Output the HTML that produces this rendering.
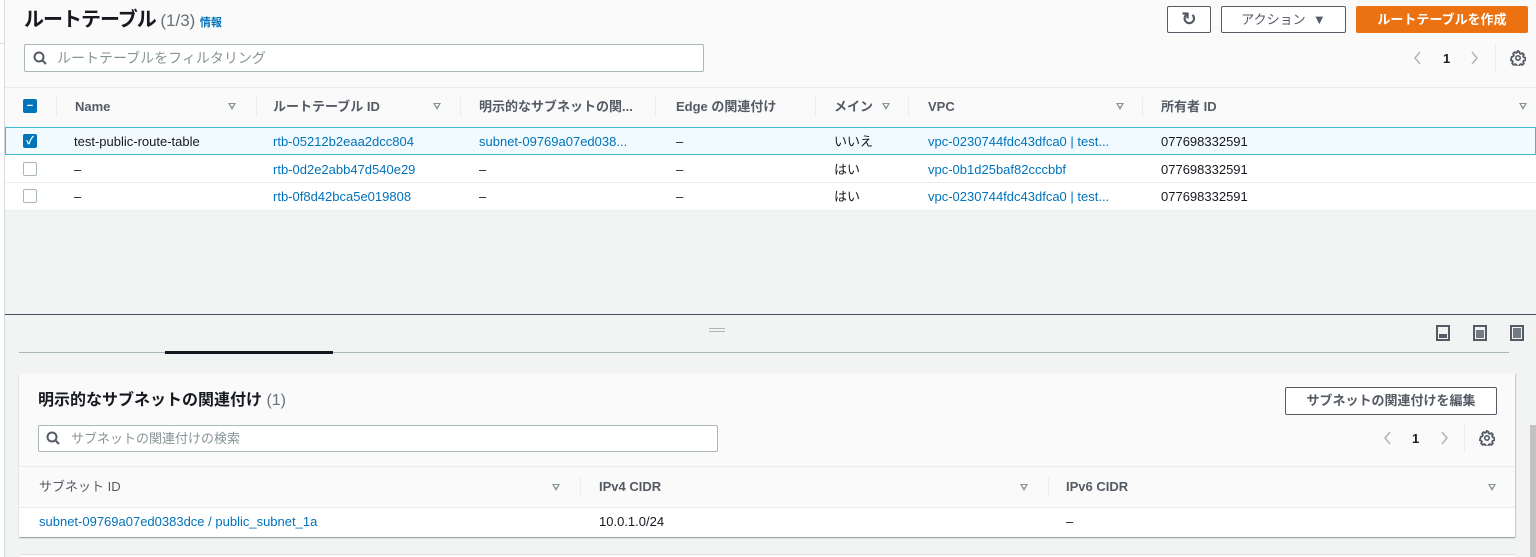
<!DOCTYPE html>
<html><head><meta charset="utf-8"><style>
*{margin:0;padding:0;box-sizing:border-box}
body{width:1536px;height:557px;overflow:hidden;background:#f2f3f3;font-family:"Liberation Sans","Noto Sans CJK JP",sans-serif;font-size:13px;color:#16191f;position:relative}
.a{position:absolute;line-height:16px;white-space:nowrap}
.lnk{color:#0073bb}
.g{color:#687078}
.hd{font-weight:bold;color:#545b64}
.tri{position:absolute;width:0;height:0;border-left:4px solid transparent;border-right:4px solid transparent;border-top:7px solid #879596}
.tri:after{content:"";position:absolute;left:-2px;top:-6px;border-left:2px solid transparent;border-right:2px solid transparent;border-top:3px solid #fff}
.sep{position:absolute;width:1px;background:#eaeded}
.cb{position:absolute;width:14px;height:14px;border:1px solid #aab7b8;border-radius:2px;background:#fff}
.cbs{position:absolute;width:14px;height:14px;background:#0073bb;border-radius:2px;color:#fff;font-size:11px;line-height:14px;text-align:center;font-weight:bold}
.row{position:absolute;left:5px;width:1531px;height:28px;background:#fff;border-bottom:1px solid #eaeded}
.btn{position:absolute;border:1px solid #545b64;background:#fff;border-radius:2px;text-align:center;font-weight:bold;color:#545b64}
.srch{position:absolute;background:#fff;border:1px solid #aab7b8;border-radius:2px;color:#879596;font-size:14px}
</style></head><body>
<svg width="0" height="0" style="position:absolute"><defs>
<g id="gear"><path d="M8 1.5l1.3.2.4 1.6 1.2.6 1.5-.8 1.5 1.5-.8 1.5.6 1.2 1.6.4.2 1.3-.2 1.3-1.6.4-.6 1.2.8 1.5-1.5 1.5-1.5-.8-1.2.6-.4 1.6-1.3.2-1.3-.2-.4-1.6-1.2-.6-1.5.8-1.5-1.5.8-1.5-.6-1.2-1.6-.4L1.5 8l.2-1.3 1.6-.4.6-1.2-.8-1.5 1.5-1.5 1.5.8 1.2-.6.4-1.6z" fill="none" stroke="#545b64" stroke-width="1.8" stroke-linejoin="round"/><circle cx="8" cy="8" r="2.2" fill="none" stroke="#545b64" stroke-width="1.6"/></g>
<g id="lt"><path d="M6 1L1 7l5 6" fill="none" stroke="#aab7b8" stroke-width="1.5"/></g>
<g id="rt"><path d="M1 1l5 6-5 6" fill="none" stroke="#aab7b8" stroke-width="1.5"/></g>
</defs></svg>
<div class="a" style="left:0;top:0;width:5px;height:557px;background:#fff"></div>
<div class="a" style="left:4px;top:0;width:1px;height:557px;background:#d5dbdb"></div>
<div class="a" style="left:5px;top:0;width:1531px;height:90px;background:#fafafa"></div>
<div class="a" style="left:0;top:43px;width:5px;height:1px;background:#d5dbdb"></div>
<div class="a" style="left:24px;top:8px;font-size:20px;line-height:24px;font-weight:bold;letter-spacing:-1px">ルートテーブル <span style="font-weight:normal;color:#687078;font-size:17px;letter-spacing:0">(1/3)</span> <span style="font-size:11px;color:#0073bb;letter-spacing:0">情報</span></div>
<div class="btn" style="left:1167px;top:6px;width:44px;height:27px;font-size:18px;line-height:24px">&#x21bb;</div>
<div class="btn" style="left:1221px;top:6px;width:125px;height:27px;font-size:13px;line-height:25px;font-weight:normal">アクション&nbsp;&nbsp;▼</div>
<div class="a" style="left:1356px;top:6px;width:172px;height:27px;background:#ec7211;border-radius:2px;color:#fff;font-weight:bold;text-align:center;line-height:27px">ルートテーブルを作成</div>
<div class="srch" style="left:24px;top:44px;width:680px;height:28px;line-height:26px;padding-left:32px">ルートテーブルをフィルタリング</div>
<svg class="a" style="left:33px;top:51px" width="14" height="14"><circle cx="6" cy="6" r="4.5" fill="none" stroke="#545b64" stroke-width="2"/><path d="M9 9l4 4" stroke="#545b64" stroke-width="2"/></svg>
<svg class="a" style="left:1414px;top:51px" width="8" height="14"><use href="#lt"/></svg>
<div class="a" style="left:1443px;top:51px;font-weight:bold">1</div>
<svg class="a" style="left:1471px;top:51px" width="8" height="14"><use href="#rt"/></svg>
<div class="sep" style="left:1495px;top:44px;height:28px"></div>
<svg class="a" style="left:1510px;top:50px" width="16" height="16"><use href="#gear"/></svg>
<div class="a" style="left:5px;top:87px;width:1531px;height:40px;background:#fafafa;border-top:1px solid #eaeded"></div>
<div class="cbs" style="left:23px;top:99px">&#x2212;</div>
<div class="sep" style="left:56px;top:97px;height:20px"></div>
<div class="a hd" style="left:75px;top:99px">Name</div><div class="tri" style="left:228px;top:103px"></div>
<div class="sep" style="left:256px;top:97px;height:20px"></div>
<div class="a hd" style="left:273px;top:99px">ルートテーブル ID</div><div class="tri" style="left:433px;top:103px"></div>
<div class="sep" style="left:460px;top:97px;height:20px"></div>
<div class="a hd" style="left:479px;top:99px">明示的なサブネットの関...</div>
<div class="sep" style="left:655px;top:97px;height:20px"></div>
<div class="a hd" style="left:676px;top:99px">Edge の関連付け</div>
<div class="sep" style="left:815px;top:97px;height:20px"></div>
<div class="a hd" style="left:834px;top:99px">メイン</div><div class="tri" style="left:882px;top:103px"></div>
<div class="sep" style="left:908px;top:97px;height:20px"></div>
<div class="a hd" style="left:928px;top:99px">VPC</div><div class="tri" style="left:1116px;top:103px"></div>
<div class="sep" style="left:1142px;top:97px;height:20px"></div>
<div class="a hd" style="left:1161px;top:99px">所有者 ID</div><div class="tri" style="left:1519px;top:103px"></div>
<div class="row" style="top:127px;background:#f1faff;border:1px solid #44b9d6;height:28px"></div>
<div class="cbs" style="left:23px;top:134px">&#x2713;</div>
<div class="a" style="left:74px;top:134px">test-public-route-table</div>
<div class="a lnk" style="left:273px;top:134px">rtb-05212b2eaa2dcc804</div>
<div class="a lnk" style="left:479px;top:134px">subnet-09769a07ed038...</div>
<div class="a" style="left:676px;top:134px">–</div>
<div class="a" style="left:834px;top:134px">いいえ</div>
<div class="a lnk" style="left:928px;top:134px">vpc-0230744fdc43dfca0 | test...</div>
<div class="a" style="left:1161px;top:134px">077698332591</div>
<div class="row" style="top:155px"></div>
<div class="cb" style="left:23px;top:162px"></div>
<div class="a" style="left:74px;top:162px">–</div>
<div class="a lnk" style="left:273px;top:162px">rtb-0d2e2abb47d540e29</div>
<div class="a" style="left:479px;top:162px">–</div>
<div class="a" style="left:676px;top:162px">–</div>
<div class="a" style="left:834px;top:162px">はい</div>
<div class="a lnk" style="left:928px;top:162px">vpc-0b1d25baf82cccbbf</div>
<div class="a" style="left:1161px;top:162px">077698332591</div>
<div class="row" style="top:183px"></div>
<div class="cb" style="left:23px;top:189px"></div>
<div class="a" style="left:74px;top:189px">–</div>
<div class="a lnk" style="left:273px;top:189px">rtb-0f8d42bca5e019808</div>
<div class="a" style="left:479px;top:189px">–</div>
<div class="a" style="left:676px;top:189px">–</div>
<div class="a" style="left:834px;top:189px">はい</div>
<div class="a lnk" style="left:928px;top:189px">vpc-0230744fdc43dfca0 | test...</div>
<div class="a" style="left:1161px;top:189px">077698332591</div>
<div class="a" style="left:5px;top:314px;width:1531px;height:1px;background:#414d5c"></div>
<div class="a" style="left:709px;top:328px;width:16px;height:1px;background:#aab7b8"></div>
<div class="a" style="left:709px;top:331px;width:16px;height:1px;background:#aab7b8"></div>
<svg class="a" style="left:1436px;top:325px" width="90" height="16"><rect x="1" y="1" width="12" height="14" fill="none" stroke="#545b64" stroke-width="2"/><rect x="3" y="9" width="8" height="4" fill="#545b64"/><rect x="38" y="1" width="12" height="14" fill="none" stroke="#545b64" stroke-width="2"/><rect x="40" y="5" width="8" height="8" fill="#545b64" opacity=".8"/><rect x="75" y="1" width="12" height="14" fill="none" stroke="#545b64" stroke-width="2"/><rect x="77" y="3" width="8" height="10" fill="#545b64" opacity=".8"/></svg>
<div class="a" style="left:19px;top:352px;width:1490px;height:1px;background:#aab7b8"></div>
<div class="a" style="left:165px;top:351px;width:168px;height:3px;background:#16191f"></div>
<div class="a" style="left:1530px;top:425px;width:6px;height:132px;background:#c1c1c1"></div>
<div class="a" style="left:19px;top:373px;width:1496px;height:164px;background:#fafafa;box-shadow:0 1px 1px rgba(0,28,36,.3),1px 1px 1px rgba(0,28,36,.15)"></div>
<div class="a" style="left:38px;top:391px;font-size:16px;line-height:20px;font-weight:bold">明示的なサブネットの関連付け <span style="font-weight:normal;color:#687078">(1)</span></div>
<div class="btn" style="left:1285px;top:387px;width:212px;height:28px;line-height:26px">サブネットの関連付けを編集</div>
<div class="srch" style="left:38px;top:425px;width:680px;height:27px;line-height:25px;padding-left:32px;font-size:13px">サブネットの関連付けの検索</div>
<svg class="a" style="left:46px;top:431px" width="14" height="14"><circle cx="6" cy="6" r="4.5" fill="none" stroke="#545b64" stroke-width="2"/><path d="M9 9l4 4" stroke="#545b64" stroke-width="2"/></svg>
<svg class="a" style="left:1384px;top:431px" width="8" height="14"><use href="#lt"/></svg>
<div class="a" style="left:1412px;top:431px;font-weight:bold">1</div>
<svg class="a" style="left:1441px;top:431px" width="8" height="14"><use href="#rt"/></svg>
<div class="sep" style="left:1464px;top:424px;height:28px"></div>
<svg class="a" style="left:1479px;top:430px" width="16" height="16"><use href="#gear"/></svg>
<div class="a" style="left:19px;top:466px;width:1496px;height:41px;background:#fafafa;border-top:1px solid #eaeded"></div>
<div class="a hd" style="left:39px;top:479px;font-weight:normal;color:#545b64">サブネット ID</div><div class="tri" style="left:552px;top:484px"></div>
<div class="sep" style="left:580px;top:477px;height:20px"></div>
<div class="a hd" style="left:599px;top:479px">IPv4 CIDR</div><div class="tri" style="left:1020px;top:484px"></div>
<div class="sep" style="left:1048px;top:477px;height:20px"></div>
<div class="a hd" style="left:1066px;top:479px">IPv6 CIDR</div><div class="tri" style="left:1488px;top:484px"></div>
<div class="a" style="left:19px;top:507px;width:1496px;height:29px;background:#fff;border-top:1px solid #eaeded"></div>
<div class="a lnk" style="left:39px;top:514px">subnet-09769a07ed0383dce / public_subnet_1a</div>
<div class="a" style="left:599px;top:514px">10.0.1.0/24</div>
<div class="a" style="left:1066px;top:514px">–</div>
<div class="a" style="left:19px;top:554px;width:1496px;height:3px;background:#fafafa;border-top:1px solid #e0e4e4"></div>
</body></html>
